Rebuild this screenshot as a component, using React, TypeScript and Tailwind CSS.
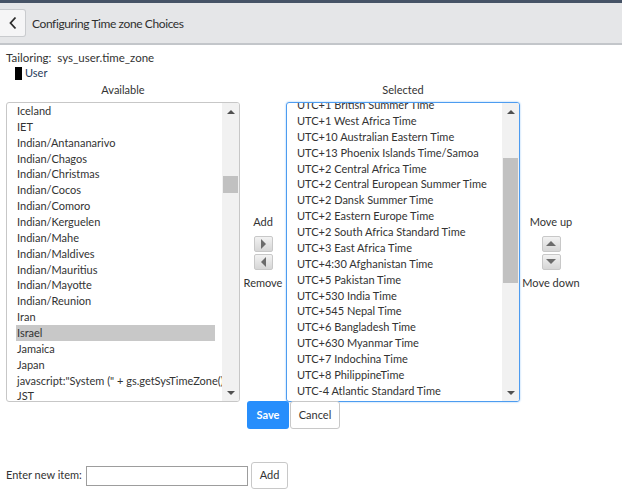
import React from 'react';

const available = [
  'Iceland',
  'IET',
  'Indian/Antananarivo',
  'Indian/Chagos',
  'Indian/Christmas',
  'Indian/Cocos',
  'Indian/Comoro',
  'Indian/Kerguelen',
  'Indian/Mahe',
  'Indian/Maldives',
  'Indian/Mauritius',
  'Indian/Mayotte',
  'Indian/Reunion',
  'Iran',
  'Israel',
  'Jamaica',
  'Japan',
  'javascript:"System (" + gs.getSysTimeZone() + ")"',
  'JST',
];

const selected = [
  'UTC+1 British Summer Time',
  'UTC+1 West Africa Time',
  'UTC+10 Australian Eastern Time',
  'UTC+13 Phoenix Islands Time/Samoa',
  'UTC+2 Central Africa Time',
  'UTC+2 Central European Summer Time',
  'UTC+2 Dansk Summer Time',
  'UTC+2 Eastern Europe Time',
  'UTC+2 South Africa Standard Time',
  'UTC+3 East Africa Time',
  'UTC+4:30 Afghanistan Time',
  'UTC+5 Pakistan Time',
  'UTC+530 India Time',
  'UTC+545 Nepal Time',
  'UTC+6 Bangladesh Time',
  'UTC+630 Myanmar Time',
  'UTC+7 Indochina Time',
  'UTC+8 PhilippineTime',
  'UTC-4 Atlantic Standard Time',
];

const Scrollbar: React.FC<{ thumbTop: number; thumbHeight: number }> = ({ thumbTop, thumbHeight }) => (
  <div className="w-[17px] h-full bg-[#f1f1f1] flex flex-col items-center">
    <div className="h-[17px] flex items-center justify-center">
      <div className="w-0 h-0 border-l-[4px] border-r-[4px] border-b-[4px] border-l-transparent border-r-transparent border-b-[#505050]" />
    </div>
    <div className="flex-1 w-full px-[1px]">
      <div className="w-full bg-[#c1c1c1]" style={{ marginTop: thumbTop, height: thumbHeight }} />
    </div>
    <div className="h-[17px] flex items-center justify-center">
      <div className="w-0 h-0 border-l-[4px] border-r-[4px] border-t-[4px] border-l-transparent border-r-transparent border-t-[#505050]" />
    </div>
  </div>
);

const ArrowButton: React.FC<{ dir: 'left' | 'right' | 'up' | 'down' }> = ({ dir }) => (
  <div className="w-[19px] h-[16px] rounded-[2px] border border-[#c8c8c8] bg-gradient-to-b from-[#f2f2f2] to-[#d6d6d6] flex items-center justify-center">
    {dir === 'right' && (
      <div className="w-0 h-0 border-t-[5px] border-b-[5px] border-l-[5px] border-t-transparent border-b-transparent border-l-[#6b6b6b]" />
    )}
    {dir === 'left' && (
      <div className="w-0 h-0 border-t-[5px] border-b-[5px] border-r-[5px] border-t-transparent border-b-transparent border-r-[#6b6b6b]" />
    )}
    {dir === 'up' && (
      <div className="w-0 h-0 border-l-[5px] border-r-[5px] border-b-[5px] border-l-transparent border-r-transparent border-b-[#6b6b6b]" />
    )}
    {dir === 'down' && (
      <div className="w-0 h-0 border-l-[5px] border-r-[5px] border-t-[5px] border-l-transparent border-r-transparent border-t-[#6b6b6b]" />
    )}
  </div>
);

export default function App() {
  return (
    <div className="w-[622px] h-[489px] bg-white overflow-hidden text-[#333] text-[11px] font-['Lato','Liberation_Sans',sans-serif]">
      <div className="h-[3px] bg-[#465366]" />
      <div className="h-[42px] bg-[#e5e6e8] border-b-2 border-[#c3c6ca] flex items-center">
        <div className="w-[26px] h-[28px] rounded-r-[3px] border border-l-0 border-[#c9cbce] bg-[#f5f5f6] flex items-center justify-center">
          <svg width="10" height="14" viewBox="0 0 10 14" fill="none">
            <path d="M7.5 1.5 L2.5 7 L7.5 12.5" stroke="#2b2b2b" strokeWidth="1.8" />
          </svg>
        </div>
        <span className="ml-[6px] pt-[2px] text-[12px] tracking-[-0.4px] text-[#2f2f2f]">Configuring Time zone Choices</span>
      </div>

      <div className="px-[6px] pt-[5px]">
        <div className="leading-[16px] text-[11.5px]">Tailoring:&nbsp; sys_user.time_zone</div>
        <div className="flex items-center h-[15px] pl-[9px]">
          <div className="w-[7px] h-[13px] bg-black" />
          <span className="ml-[3px] text-[#1f3a5a]">User</span>
        </div>

        <div className="flex mt-[1px]">
          <div className="w-[234px] flex flex-col">
            <div className="h-[20px] leading-[16px] text-center">Available</div>
            <div className="h-[300px] border border-[#c7c7c7] rounded-[3px] flex overflow-hidden">
              <div className="flex-1 pl-[9px] overflow-hidden">
                {available.map(item => (
                  <div
                    key={item}
                    className={`h-[15.86px] leading-[15.86px] whitespace-nowrap pl-[1px] w-[199px] ${item === 'Israel' ? 'bg-[#c8c8c8]' : ''}`}
                  >
                    {item}
                  </div>
                ))}
              </div>
              <Scrollbar thumbTop={56} thumbHeight={17} />
            </div>
          </div>

          <div className="w-[46px] flex flex-col items-center justify-center pt-[21px] whitespace-nowrap">
            <div className="mb-[5px]">Add</div>
            <div className="flex flex-col gap-[2px]">
              <ArrowButton dir="right" />
              <ArrowButton dir="left" />
            </div>
            <div className="mt-[5px]">Remove</div>
          </div>

          <div className="w-[234px] flex flex-col">
            <div className="h-[20px] leading-[16px] text-center">Selected</div>
            <div className="h-[300px] border border-[#4d9cf0] rounded-[3px] shadow-[0_0_2px_#8ec0f7] flex overflow-hidden">
              <div className="flex-1 pl-[10px] overflow-hidden">
                <div className="mt-[-6px]">
                  {selected.map(item => (
                    <div key={item} className="h-[15.88px] leading-[15.88px] whitespace-nowrap">
                      {item}
                    </div>
                  ))}
                </div>
              </div>
              <Scrollbar thumbTop={38} thumbHeight={125} />
            </div>
          </div>

          <div className="w-[62px] flex flex-col items-center justify-center pt-[21px] whitespace-nowrap">
            <div className="mb-[5px]">Move up</div>
            <div className="flex flex-col gap-[2px]">
              <ArrowButton dir="up" />
              <ArrowButton dir="down" />
            </div>
            <div className="mt-[5px]">Move down</div>
          </div>
        </div>

        <div className="flex ml-[241px] mt-[-1px]">
          <button className="w-[42px] h-[28px] rounded-[3px] bg-[#278efc] text-white font-bold">Save</button>
          <button className="ml-[1px] w-[50px] h-[28px] rounded-[3px] border border-[#c8c8c8] bg-white text-[#333]">
            Cancel
          </button>
        </div>

        <div className="flex items-center mt-[33px]">
          <span className="w-[80px] whitespace-nowrap">Enter new item:</span>
          <div className="w-[162px] h-[20px] border border-[#9d9d9d] bg-white" />
          <button className="ml-[3px] w-[37px] h-[27px] rounded-[3px] border border-[#c8c8c8] bg-white">Add</button>
        </div>
      </div>
    </div>
  );
}
